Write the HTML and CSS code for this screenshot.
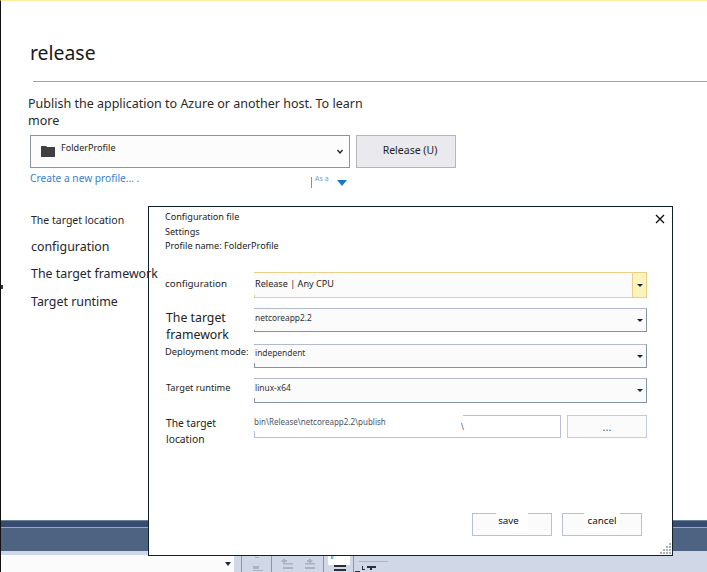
FILE: index.html
```html
<!DOCTYPE html>
<html lang="en">
<head>
<meta charset="utf-8">
<title>release</title>
<link rel="stylesheet" href="styles.css">
</head>
<body>
<div class="page">
  <main class="main">
    <h1 class="title">release</h1>
    <hr class="rule">
    <p class="intro">Publish the application to Azure or another host. To learn<br>more</p>
    <div class="profile-row">
      <div class="profile-select">
        <svg class="folder" width="14" height="12" viewBox="0 0 14 12"><path d="M0 1h5l1 1h8v10H0z" fill="#3f3f3f"/></svg>
        <span class="profile-name">FolderProfile</span>
        <svg class="chev" width="6" height="5" viewBox="0 0 6 5"><path d="M.5 1 3 4l2.5-3" fill="none" stroke="#222" stroke-width="1.3"/></svg>
      </div>
      <button class="release-btn">Release (U)</button>
    </div>
    <div class="link-row">
      <a class="create-link">Create a new profile... .</a>
      <span class="tick"></span>
      <span class="asa">As a</span>
      <svg class="blue-arrow" width="10" height="6" viewBox="0 0 10 6"><path d="M0 0h10L5 6z" fill="#1b78c9"/></svg>
    </div>
    <ul class="summary">
      <li class="summary-small">The target location</li>
      <li>configuration</li>
      <li>The target framework</li>
      <li class="summary-last">Target runtime</li>
    </ul>
  </main>

  <div class="band"><div class="band-dark"></div><div class="band-mid"></div><div class="band-light"></div></div>

  <div class="statusbar">
    <div class="status-left">
      <svg width="6" height="4" viewBox="0 0 6 4"><path d="M0 0h6L3 4z" fill="#1c2b3a"/></svg>
    </div>
    <svg class="toolbar" width="473" height="17" viewBox="234 555 473 17">
      <g fill="#aab2c3">
        <rect x="241" y="555" width="1" height="17" fill="#8c95a9"/>
        <rect x="271" y="555" width="1" height="17" fill="#8c95a9"/>
        <rect x="323" y="555" width="1" height="17" fill="#8c95a9"/>
        <rect x="353" y="555" width="1" height="17" fill="#8c95a9"/>
        <rect x="253" y="566" width="6" height="3"/>
        <rect x="253" y="570" width="10" height="1"/>
        <rect x="255" y="557" width="4" height="1"/>
        <path d="M281 561l4-3v2h2v2h-2v2z"/>
        <rect x="283" y="563" width="10" height="1.5"/><rect x="283" y="567" width="10" height="2"/>
        <path d="M313 561l-4-3v2h-2v2h2v2z"/>
        <rect x="305" y="563" width="10" height="1.5"/><rect x="305" y="567" width="10" height="2"/>
        <rect x="359" y="561" width="29" height="1"/>
      </g>
      <rect x="328" y="555" width="22" height="10" fill="#fff"/>
      <rect x="331" y="555" width="1" height="4" fill="#d98b5f"/>
      <rect x="332" y="555" width="1.5" height="4" fill="#7cc4ee"/>
      <rect x="334" y="565" width="12" height="2" fill="#2a2f3a"/>
      <rect x="334" y="569" width="12" height="2" fill="#2a2f3a"/>
      <path d="M362 566h1v3h2v1h-3zM367 566h9v2h-4v2h-2v-2h-3z" fill="#2a2f3a"/>
      <rect x="355" y="571" width="5" height="1" fill="#2a2f3a"/>
    </svg>
  </div>

  <section class="dialog">
    <header class="dialog-head">
      <div>Configuration file</div>
      <div>Settings</div>
      <div>Profile name: FolderProfile</div>
    </header>
    <svg class="close" width="10" height="10" viewBox="0 0 10 10"><path d="M1 1l8 8M9 1 1 9" stroke="#111" stroke-width="1.4" fill="none"/></svg>

    <div class="form">
      <div class="row row-config">
        <label class="lab lab-config">configuration</label>
        <div class="combo combo-active">
          <span class="value value-config">Release | Any CPU</span>
          <span class="drop drop-active"><svg width="6" height="3" viewBox="0 0 6 3"><path d="M0 0h6L3 3z" fill="#1c2533"/></svg></span>
        </div>
      </div>
      <div class="row row-fw">
        <label class="lab lab-large">The target framework</label>
        <div class="combo">
          <span class="value value-fw">netcoreapp2.2</span>
          <span class="drop"><svg width="6" height="3" viewBox="0 0 6 3"><path d="M0 0h6L3 3z" fill="#1c2533"/></svg></span>
        </div>
      </div>
      <div class="row row-mode">
        <label class="lab lab-mode">Deployment mode:</label>
        <div class="combo">
          <span class="value value-mode">independent</span>
          <span class="drop"><svg width="6" height="3" viewBox="0 0 6 3"><path d="M0 0h6L3 3z" fill="#1c2533"/></svg></span>
        </div>
      </div>
      <div class="row row-runtime">
        <label class="lab lab-runtime">Target runtime</label>
        <div class="combo">
          <span class="value value-runtime">linux-x64</span>
          <span class="drop"><svg width="6" height="3" viewBox="0 0 6 3"><path d="M0 0h6L3 3z" fill="#1c2533"/></svg></span>
        </div>
      </div>
      <div class="row row-loc">
        <label class="lab lab-loc">The target location</label>
        <div class="loc-fields">
          <div class="textbox"><span class="value value-path">bin\Release\netcoreapp2.2\publish</span><span class="slash">\</span></div>
          <button class="browse">...</button>
        </div>
      </div>
    </div>

    <footer class="dialog-foot">
      <button class="foot-btn"><span class="foot-label foot-save">save</span></button>
      <button class="foot-btn"><span class="foot-label">cancel</span></button>
    </footer>
    <svg class="grip" width="11" height="11" viewBox="0 0 11 11"><g fill="#a9b0bd"><rect x="9" y="0" width="2" height="2"/><rect x="9" y="3" width="2" height="2"/><rect x="6" y="3" width="2" height="2"/><rect x="9" y="6" width="2" height="2"/><rect x="6" y="6" width="2" height="2"/><rect x="3" y="6" width="2" height="2"/><rect x="9" y="9" width="2" height="2"/><rect x="6" y="9" width="2" height="2"/><rect x="3" y="9" width="2" height="2"/><rect x="0" y="9" width="2" height="2"/></g></svg>
  </section>
  <span class="notch"></span>
</div>
</body>
</html>
```

FILE: styles.css
```css
* { box-sizing: border-box; }
html, body { margin: 0; padding: 0; background: #fff; }
body { font-family: "Noto Sans", "Open Sans", sans-serif; color: #1e1e1e; }
button { font: inherit; color: inherit; padding: 0; }

.page {
  position: relative;
  width: 707px;
  height: 572px;
  overflow: hidden;
  display: flex;
  flex-direction: column;
  border-top: 1px solid #ffeb9c;
  border-left: 1px solid #111;
}
.notch { position: absolute; left: -1px; top: 284px; width: 3px; height: 4px; background: #333; }

.main { height: 519px; flex: none; }
.title { margin: 0; padding: 37px 0 0 29px; font-size: 19.4px; line-height: 30px; font-weight: 400; color: #1a1a1a; }
.rule { margin: 13px 0 0 32px; border: 0; height: 1px; background: #a3a3a3; }
.intro { margin: 13px 0 0 27px; font-size: 12.5px; line-height: 17px; color: #2a2a2a; }

.profile-row { display: flex; gap: 6px; margin: 6px 0 0 29px; }
.profile-select {
  width: 320px; height: 33px;
  display: flex; align-items: flex-start;
  border: 1px solid #8b95a0;
  background: #fcfcfc;
  padding-left: 10px;
}
.folder { margin-top: 9px; flex: none; }
.profile-name { margin: 3px 0 0 6px; font-size: 9.1px; line-height: 17px; flex: 1; }
.chev { margin: 13px 6px 0 0; flex: none; }
.release-btn { width: 100px; height: 33px; background: #e9e9ee; border: 1px solid #b4b4ba; font-size: 10.5px; padding: 0 0 4px 8px; }

.link-row { position: relative; display: flex; align-items: flex-start; height: 30px; margin: 3px 0 0 29px; }
.create-link { font-size: 10.2px; line-height: 15px; color: #3a80cc; width: 281px; flex: none; }
.tick { width: 2px; height: 11px; margin-top: 6px; border-left: 1px solid #5b9bd8; flex: none; }
.asa { font-size: 7px; line-height: 10px; color: #6a9fd8; margin: 3px 0 0 2px; width: 22px; flex: none; }
.blue-arrow { margin-top: 9px; flex: none; }

.summary {
  position: relative; z-index: 1;
  list-style: none; margin: 0; padding: 7px 0 0 30px;
  width: 160px;
  font-size: 12.4px; color: #25252f;
}
.summary li { height: 27px; line-height: 24px; white-space: nowrap; }
.summary .summary-last { padding-top: 1px; }
.summary .summary-small { font-size: 10.5px; }

.band { flex: none; height: 35px; display: flex; flex-direction: column; }
.band-dark { height: 8px; background: #364c70; border-top: 1px solid #6d7f9c; border-bottom: 1px solid #9aa7c0; }
.band-mid { height: 23px; background: #4e6282; }
.band-light { height: 4px; background: #d0d7e7; }

.statusbar { flex: 1; display: flex; background: #d0d7e7; }
.status-left {
  width: 233px; background: #fbfbfb; flex: none;
  display: flex; justify-content: flex-end; align-items: center;
  padding-right: 3px;
}
.toolbar { display: block; flex: none; }

.dialog {
  position: absolute;
  left: 147px; top: 205px;
  width: 525px; height: 350px;
  background: #fff;
  border: 1px solid #10202e;
  display: flex; flex-direction: column;
  padding-left: 16px;
}
.dialog-head { height: 65px; padding-top: 3px; font-size: 9.1px; line-height: 14.5px; color: #222; }
.close { position: absolute; right: 7px; top: 7px; }
.grip { position: absolute; right: 1px; bottom: 1px; }

.form { display: flex; flex-direction: column; }
.row { display: grid; grid-template-columns: 89px 393px; grid-template-rows: minmax(0, 1fr); align-items: start; }
.row-config { height: 26px; }
.row-fw { height: 24px; margin-top: 10px; }
.row-mode { height: 24px; margin-top: 12px; }
.row-runtime { height: 25px; margin-top: 10px; }
.row-loc { height: 23px; margin-top: 12px; }

.lab { color: #222; }
.lab-config { font-size: 9.8px; line-height: 23px; }
.lab-large { font-size: 12.3px; line-height: 17px; margin: 1px 0 0 1px; width: 72px; }
.lab-mode { font-size: 9.3px; line-height: 16px; }
.lab-runtime { font-size: 9.2px; line-height: 19px; margin-left: 1px; }
.lab-loc { font-size: 10.3px; line-height: 15.5px; margin: 1px 0 0 1px; width: 60px; }

.combo {
  height: 100%;
  display: flex; align-items: flex-start; justify-content: space-between;
  background: #fbfbfb;
  border: 1px solid #8593a8;
  border-top-color: #b4bccb;
}
.combo-active { border-color: #e9cf87; }
.value {
  display: block;
  margin-left: -1px;
  padding: 1px 60px 0 1px;
  height: 18px;
  background: #fbfbfb;
  font-size: 8.4px;
  line-height: 16px;
  color: #333;
}
.value-config { font-size: 9.1px; line-height: 20px; height: 22px; color: #1c1c1c; }
.value-fw { height: 21px; padding-top: 1px; }
.value-mode { height: 18px; padding-top: 0; }
.value-runtime { height: 19px; }
.drop { width: 13px; height: 100%; display: flex; align-items: center; justify-content: center; align-self: stretch; }
.drop-active { width: 14px; background: #fdf3bd; border-left: 1px solid #e9cf87; }

.loc-fields { display: flex; gap: 6px; height: 23px; }
.textbox {
  position: relative;
  width: 307px; height: 23px;
  border: 1px solid #b6c0d6;
  background: #fff;
}
.value-path { width: 209px; height: 16px; padding: 0; margin-top: -1px; line-height: 14px; background: #fff; color: #4b5565; font-size: 8px; }
.slash { position: absolute; left: 206px; top: 4px; font-size: 8px; line-height: 14px; color: #555; }
.browse { width: 80px; height: 23px; background: #fbfbfb; border: 1px solid #c4cbdc; font-size: 11px; color: #555; }

.dialog-foot { margin-top: auto; display: flex; justify-content: flex-end; gap: 10px; padding: 0 30px 19px 0; }
.foot-btn { width: 80px; height: 23px; background: #fbfbfb; border: 1px solid #b6c0d6; display: flex; justify-content: center; align-items: flex-start; }
.foot-label { display: block; margin-top: -1px; padding: 0 3px; height: 18px; background: #fff; font-size: 9.8px; line-height: 15px; color: #111; }
.foot-save { padding: 0 9px 0 2px; }
```
